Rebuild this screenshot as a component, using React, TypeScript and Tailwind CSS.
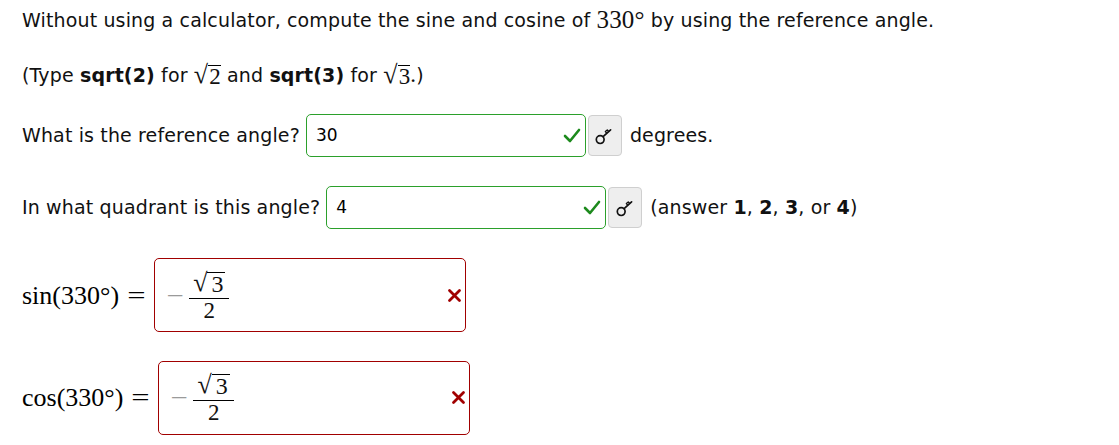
import React from 'react';

const sans = { fontFamily: '"DejaVu Sans", Verdana, sans-serif' };
const serif = { fontFamily: '"Liberation Serif", "Times New Roman", serif' };

const Check: React.FC = () => (
  <svg width="18" height="15" viewBox="0 0 18 15" className="shrink-0">
    <path d="M2 8 L7 13 L16 2" fill="none" stroke="#1d8a1d" strokeWidth="2.6" strokeLinecap="round" strokeLinejoin="round" />
  </svg>
);

const Cross: React.FC = () => (
  <svg width="15" height="15" viewBox="0 0 15 15" className="shrink-0">
    <path d="M2.5 2.5 L12.5 12.5 M12.5 2.5 L2.5 12.5" stroke="#a10000" strokeWidth="2.8" strokeLinecap="round" />
  </svg>
);

// key: ring bottom-left, shaft up-right, small bit at the end
const KeyIcon: React.FC = () => (
  <svg width="19" height="18" viewBox="0 0 19 18">
    <circle cx="5.2" cy="12.6" r="3.9" fill="none" stroke="#111" strokeWidth="1.7" />
    <path d="M8.1 9.7 L15.6 2.8" stroke="#111" strokeWidth="1.7" strokeLinecap="round" />
    <path d="M11.8 6.2 L10.4 4.6 L12.3 2.9 L13.7 4.4" fill="none" stroke="#111" strokeWidth="1.4" strokeLinejoin="round" />
  </svg>
);

const KeyButton: React.FC = () => (
  <button className="ml-[2px] flex h-[41px] w-[34px] items-center justify-center rounded-[4px] border border-[#cfcfcf] bg-[#eeeeee]">
    <KeyIcon />
  </button>
);

const Sqrt: React.FC<{ n: string }> = ({ n }) => (
  <span className="inline-flex items-start" style={serif}>
    <span className="text-[26px] leading-[26px]">√</span>
    <span className="mt-[3px] border-t border-black pl-[1px] text-[23px] leading-[22px]">{n}</span>
  </span>
);

const TextAnswer: React.FC<{ value: string }> = ({ value }) => (
  <div className="flex h-[43px] w-[280px] items-center justify-between rounded-[5px] border border-[#2ba02b] pl-[9px] pr-[4px] tracking-normal">
    <span className="text-[17px] text-black">{value}</span>
    <Check />
  </div>
);

const Fraction: React.FC = () => (
  <div className="flex items-center" style={serif}>
    <span className="mr-[8px] inline-block scale-x-[1.4] text-[22px] text-[#9a9a9a]">−</span>
    <div className="flex flex-col items-center">
      <span className="flex items-start px-[4px]">
        <span className="text-[26px] leading-[25px]">√</span>
        <span className="mt-[2px] border-t border-black pl-[4px] pr-[2px] text-[24px] leading-[22px]">3</span>
      </span>
      <span className="mt-[3px] h-px w-full bg-black" />
      <span className="mt-[2px] text-[23px] leading-[20px]">2</span>
    </div>
  </div>
);

const MathAnswer: React.FC = () => (
  <div className="flex h-[74px] w-[312px] items-center justify-between rounded-[5px] border border-[#a10000] pl-[14px] pr-[3px]">
    <Fraction />
    <Cross />
  </div>
);

const MathLabel: React.FC<{ fn: string }> = ({ fn }) => (
  <span className="mr-[10px] flex items-center text-[26px] text-black" style={serif}>
    {fn}(330°)<span className="ml-[10px] inline-block scale-x-[1.25]">=</span>
  </span>
);

export default function App() {
  return (
    <div className="min-h-screen bg-white pl-[22px] pt-[6px] text-[#111]" style={sans}>
      <div className="flex h-[28px] items-center text-[19px] tracking-[0.14px]">
        <span className="whitespace-pre">Without using a calculator, compute the sine and cosine of </span>
        <span className="text-[25px] leading-[24px]" style={serif}>330°</span>
        <span className="whitespace-pre"> by using the reference angle.</span>
      </div>

      <div className="mt-[27px] flex h-[28px] items-center whitespace-pre text-[19px] tracking-[0.14px]">
        <span>(Type </span>
        <b>sqrt(2)</b>
        <span> for </span>
        <Sqrt n="2" />
        <span> and </span>
        <b>sqrt(3)</b>
        <span> for </span>
        <Sqrt n="3" />
        <span className="text-[23px]" style={serif}>.</span>
        <span>)</span>
      </div>

      <div className="mt-[25px] flex h-[43px] items-center text-[19px] tracking-[0.14px]">
        <span className="mr-[6px]">What is the reference angle?</span>
        <TextAnswer value="30" />
        <KeyButton />
        <span className="ml-[8px]">degrees.</span>
      </div>

      <div className="mt-[29px] flex h-[43px] items-center text-[19px] tracking-[0.14px]">
        <span className="mr-[6px]">In what quadrant is this angle?</span>
        <TextAnswer value="4" />
        <KeyButton />
        <span className="ml-[8px] whitespace-pre">
          (answer <b>1</b>, <b>2</b>, <b>3</b>, or <b>4</b>)
        </span>
      </div>

      <div className="mt-[29px] flex h-[74px] items-center">
        <MathLabel fn="sin" />
        <MathAnswer />
      </div>

      <div className="mt-[29px] flex h-[73px] items-center">
        <MathLabel fn="cos" />
        <MathAnswer />
      </div>
    </div>
  );
}
